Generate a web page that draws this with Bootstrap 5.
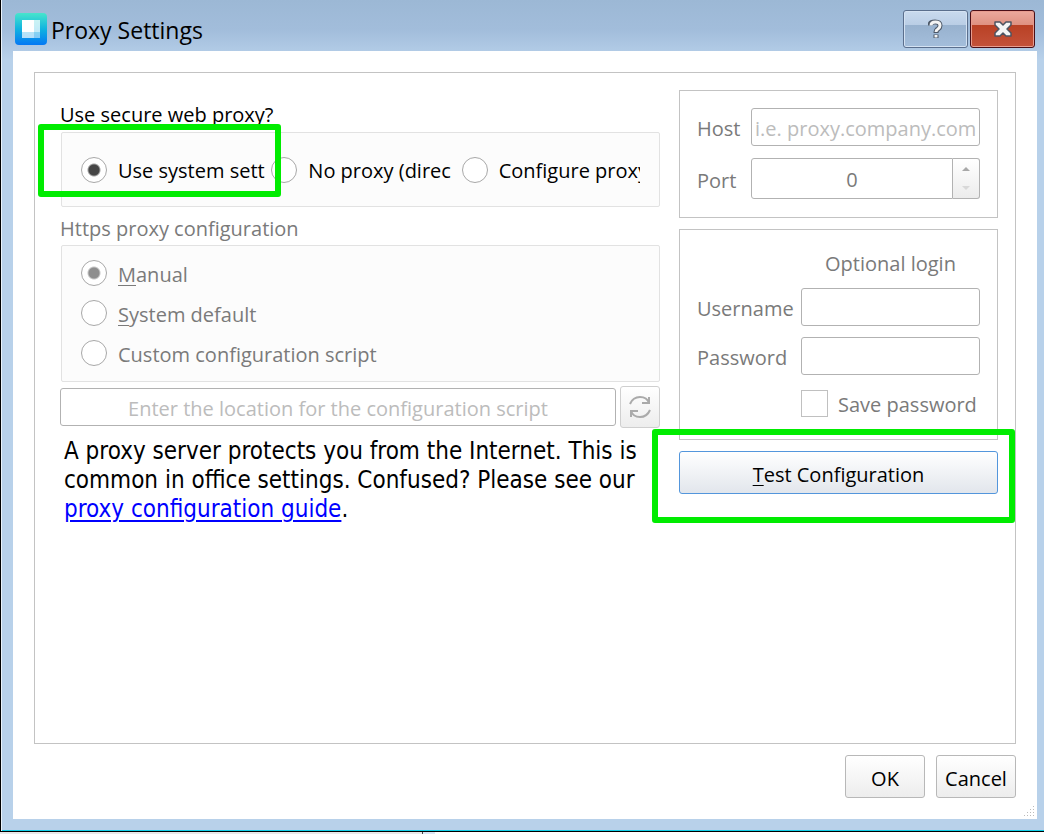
<!DOCTYPE html>
<html lang="en">
<head>
<meta charset="utf-8">
<meta name="viewport" content="width=device-width, initial-scale=1">
<title>Proxy Settings</title>
<link href="https://cdn.jsdelivr.net/npm/bootstrap@5.3.0/dist/css/bootstrap.min.css" rel="stylesheet">
<style>
  body { font-family: "Open Sans", "Noto Sans", sans-serif; font-size: 20px; line-height: 28px; color: #000; background: #e9e9e9; }
  /* window frame */
  .win { background: linear-gradient(#9cb8d5, #a2bddb 30px, #b8d1ea 60px, #b8d1ea); border: solid #000; border-width: 0 0 1px 1px; box-shadow: inset 1px 0 #eaf3fb, inset 0 -1px #12cfe8; padding: 0 7px 12px 12px; }
  .titlebar { height: 51px; padding: 10px 2px 3px 2px; }
  .titlebar h1 { font-size: 23px; line-height: 32px; font-weight: 400; }
  .app-icon { margin-top: 3px; }
  .cap-group { gap: 2px; }
  .cap-btn { width: 65px; height: 38px; border-radius: 3px; padding: 0; }
  .cap-btn svg { display: block; margin: 0 auto; }
  .cap-help { border: 1px solid #5b6f8d; background: linear-gradient(#c9daee, #b9cde5 40%, #98b2cf 40%, #a4bedb); box-shadow: inset 0 0 0 1px #d4e2f2; }
  .cap-close { border: 1px solid #4a0f17; background: linear-gradient(#eba99d, #de9080 40%, #b94125 40%, #c4523a); box-shadow: inset 0 0 0 1px #e79c8f; }
  .client { background: #fff; padding: 21px; }
  .panel { border: 1px solid #c3c3c3; padding: 17px 17px 20px 25px; column-gap: 19px; }
  .col-main { flex: 1 1 0; min-width: 0; }
  .col-side { flex: 0 0 319px; }
  .section-label { line-height: 28px; }
  .first-label { padding: 11px 0 3px; }
  .next-label { padding: 8px 0 2px; }
  .dim, .dim label { color: #7a7a7a; }
  .choices { border: 1px solid #e2e2e2; border-radius: 2px; background: #fcfcfc; padding: 0 19px; margin: 0 0 0 1px; }
  .choices-row { height: 75px; gap: 12px; }
  .choices-list { padding-top: 7px; padding-bottom: 8px; }
  .choice { min-height: 40px; gap: 11px; }
  .choice-cell { flex: 1 1 0; min-width: 0; }
  .choice label { white-space: nowrap; padding-top: 3px; }
  .choice-clip { overflow: hidden; }
  .form-check-input.dot { width: 26px; height: 26px; margin: 0; flex: none; border: 1px solid #a8a8a8; background: #fff; opacity: 1; box-shadow: none; }
  .form-check-input.dot:checked { background: radial-gradient(circle, #464646 5px, #fff 7px); }
  .form-check-input.dot:checked:disabled { background: radial-gradient(circle, #8e8e8e 5px, #fff 7px); }
  .form-check-input.tick { width: 27px; height: 27px; margin: 0; border: 1px solid #c0c0c0; border-radius: 0; opacity: 1; background: #fff; }
  .form-check-input:disabled ~ label { opacity: 1; }
  .field, .field:disabled { height: 38px; padding: 2px 4px 0; font-size: 20px; line-height: 28px; color: #7a7a7a; background: #fff; border: 1px solid #b2b2b2; border-radius: 3px; min-width: 0; }
  .field::placeholder { color: #bcbcbc; opacity: 1; }
  .soft-btn, .soft-btn:disabled { border: 1px solid #b8b8b8; border-radius: 3px; background: linear-gradient(#fff, #ededed); color: #000; font-size: 20px; opacity: 1; height: 43px; padding: 4px 0 0; }
  .soft-btn.reload { width: 40px; height: 42px; padding: 0; border-color: #cfcfcf; }
  .soft-btn.reload svg { display: block; margin: 0 auto; }
  .soft-btn.go { border-color: #5396dc; background: linear-gradient(#fff, #e2e6ec); }
  .foot-btn { width: 80px; }
  .foot-row { gap: 11px; padding-top: 11px; }
  .box { border: 1px solid #c3c3c3; padding: 17px; }
  .box label { padding-top: 4px; }
  .box .field { padding-left: 3px; padding-right: 3px; }
  .spin .field { height: 41px; border-radius: 3px 0 0 3px; }
  .stepper { width: 27px; border: 1px solid #b2b2b2; border-left: 0; border-radius: 0 3px 3px 0; background: linear-gradient(#fff, #ececec); }
  .stepper button { border: 0; background: none; padding: 0; flex: 1; line-height: 0; }
  .label-host { width: 54px; }
  .label-login { width: 104px; }
  .port-row { margin-top: 12px; margin-bottom: 1px; }
  .login-box { margin-top: 11px; }
  .login-head { margin-left: 104px; padding: 3px 0 10px; }
  .login-row { margin-top: 11px; }
  .save-row { height: 32px; margin: 12px 0 3px 104px; gap: 10px; }
  .test-row { margin-top: 11px; }
  .note { font-family: "DejaVu Sans Condensed", "DejaVu Sans", sans-serif; font-size: 24px; line-height: 29px; padding: 9px 0 0 4px; }
  .note a { color: #00f; text-decoration-thickness: 2px; text-underline-offset: 3px; }
  .accesskey { text-decoration: underline; text-underline-offset: 3px; text-decoration-thickness: 1px; }
  /* green callout frames lying over the controls */
  .callout-host { position: relative; }
  .callout { position: absolute; border: 6px solid #00ec00; border-radius: 3px; pointer-events: none; z-index: 2; }
  .callout-choice { left: -24px; top: -9px; width: 243px; height: 73px; }
  .callout-test { left: -27px; right: -17px; top: -22px; height: 94px; }
  .grip { position: absolute; right: 2px; bottom: 2px; }
  .under { height: 2px; background: linear-gradient(90deg, #e9e9e9 422px, #444 422px, #444 423px, #dce6f4 423px, #dce6f4 435px, #fff 435px); }
</style>
</head>
<body>
<div class="d-flex flex-column min-vh-100">
<main class="win flex-grow-1 d-flex flex-column">
  <header class="titlebar d-flex align-items-start">
    <svg width="32" height="32" viewBox="0 0 32 32" class="app-icon me-1" aria-hidden="true">
      <defs><linearGradient id="ic" x2="0" y2="1"><stop stop-color="#47e5cc"/><stop offset=".5" stop-color="#10b3e0"/><stop offset="1" stop-color="#0478f4"/></linearGradient></defs>
      <rect width="32" height="32" rx="4" fill="url(#ic)"/>
      <path fill="#fff" d="M7 7h12v12H7z"/>
      <path fill="#fff" opacity=".75" d="M19 7h6v12h-6z"/>
      <path fill="#fff" opacity=".7" d="M7 19h12v6H7z"/>
      <path fill="#fff" opacity=".5" d="M19 19h6v6h-6z"/>
    </svg>
    <h1 class="mb-0 mt-1 flex-grow-1">Proxy Settings</h1>
    <div class="d-flex cap-group">
      <button type="button" class="cap-btn cap-help" aria-label="Help">
        <svg width="16" height="22" viewBox="0 0 16 22" fill="none" aria-hidden="true"><path d="M2 7.500Q2 4 7 4q5 0 5 3.500 0 2-2 3.500-2 1-2 4M8 16.500v3.500" stroke="#4d5867" stroke-width="5"/><path d="M3 7.500Q3 4 7.500 4 12 4 12 7.500q0 2-2 3.500-2 1-2 3M8 17v2.500" stroke="#f4f4f4" stroke-width="3"/></svg>
      </button>
      <button type="button" class="cap-btn cap-close" aria-label="Close">
        <svg width="20" height="18" viewBox="0 0 20 18" aria-hidden="true"><path d="M2 2h5l3 3 3-3h5v3l-4 4 4 4v3h-5l-3-3-3 3H2v-3l4-4-4-4z" fill="#f4f4f4" stroke="#4d5360" stroke-width="1.500" stroke-linejoin="round"/></svg>
      </button>
    </div>
  </header>

  <form class="client flex-grow-1 d-flex flex-column position-relative">
    <div class="panel d-flex flex-grow-1 align-items-start">
      <div class="col-main">
        <div class="section-label first-label">Use secure web proxy?</div>
        <div class="choices choices-row d-flex align-items-center callout-host">
          <div class="choice choice-cell d-flex align-items-center"><input class="form-check-input dot" type="radio" name="mode" id="m1" checked><label for="m1">Use system sett</label></div>
          <div class="choice choice-cell d-flex align-items-center"><input class="form-check-input dot" type="radio" name="mode" id="m2"><label for="m2">No proxy (direc</label></div>
          <div class="choice choice-cell choice-clip d-flex align-items-center"><input class="form-check-input dot" type="radio" name="mode" id="m3"><label for="m3">Configure proxy</label></div>
          <div class="callout callout-choice"></div>
        </div>
        <div class="section-label next-label dim">Https proxy configuration</div>
        <div class="choices choices-list dim">
          <div class="choice d-flex align-items-center"><input class="form-check-input dot" type="radio" name="conf" id="c1" checked disabled><label for="c1"><span class="accesskey">M</span>anual</label></div>
          <div class="choice d-flex align-items-center"><input class="form-check-input dot" type="radio" name="conf" id="c2" disabled><label for="c2"><span class="accesskey">S</span>ystem default</label></div>
          <div class="choice d-flex align-items-center"><input class="form-check-input dot" type="radio" name="conf" id="c3" disabled><label for="c3">Custom configuration script</label></div>
        </div>
        <div class="d-flex align-items-center gap-1 pt-1">
          <input class="form-control field text-center" type="text" placeholder="Enter the location for the configuration script" aria-label="Configuration script location" disabled>
          <button type="button" class="btn soft-btn reload flex-shrink-0" aria-label="Reload script" disabled>
            <svg width="24" height="26" viewBox="0 0 24 26" fill="none" stroke="#aaa" stroke-width="2" aria-hidden="true"><path d="M2 10Q5 3 12 3t9 6M14 9h7V3M22 16q-3 7-10 7T3 17M10 17H3v6"/></svg>
          </button>
        </div>
        <p class="note mb-0">A proxy server protects you from the Internet. This is common in office settings. Confused? Please see our <a href="#guide">proxy configuration guide</a>.</p>
      </div>

      <div class="col-side">
        <div class="box dim">
          <div class="d-flex align-items-center"><label class="label-host flex-shrink-0" for="host">Host</label><input class="form-control field" type="text" id="host" placeholder="i.e. proxy.company.com" disabled></div>
          <div class="d-flex align-items-center spin port-row"><label class="label-host flex-shrink-0" for="port">Port</label><input class="form-control field text-center" type="text" inputmode="numeric" id="port" value="0" disabled>
            <div class="stepper d-flex flex-column align-self-stretch flex-shrink-0">
              <button type="button" aria-label="Increase port" disabled><svg width="8" height="4" aria-hidden="true"><path d="M0 4l4-4 4 4z" fill="#a8a8a8"/></svg></button>
              <button type="button" aria-label="Decrease port" disabled><svg width="8" height="4" aria-hidden="true"><path d="M0 0l4 4 4-4z" fill="#d8d8d8"/></svg></button>
            </div>
          </div>
        </div>
        <div class="box dim login-box">
          <div class="login-head text-center">Optional login</div>
          <div class="d-flex align-items-center"><label class="label-login flex-shrink-0" for="user">Username</label><input class="form-control field" type="text" id="user" disabled></div>
          <div class="d-flex align-items-center login-row"><label class="label-login flex-shrink-0" for="pass">Password</label><input class="form-control field" type="password" id="pass" disabled></div>
          <div class="d-flex align-items-center save-row"><input class="form-check-input tick" type="checkbox" id="save" disabled><label for="save">Save password</label></div>
        </div>
        <div class="callout-host test-row">
          <button type="button" class="btn soft-btn go w-100 d-block"><span class="accesskey">T</span>est Configuration</button>
          <div class="callout callout-test"></div>
        </div>
      </div>
    </div>
    <div class="d-flex justify-content-end foot-row">
      <button type="button" class="btn soft-btn foot-btn">OK</button>
      <button type="button" class="btn soft-btn foot-btn">Cancel</button>
    </div>
    <svg class="grip" width="11" height="11" viewBox="0 0 11 11" fill="#bbb" aria-hidden="true"><path d="M9 0h1v1H9zM6 3h1v1H6zM9 3h1v1H9zM3 6h1v1H3zM6 6h1v1H6zM9 6h1v1H9zM0 9h1v1H0zM3 9h1v1H3zM6 9h1v1H6zM9 9h1v1H9z"/></svg>
  </form>
</main>
<div class="under"></div>
</div>
<script src="https://cdn.jsdelivr.net/npm/bootstrap@5.3.0/dist/js/bootstrap.bundle.min.js"></script>
</body>
</html>
